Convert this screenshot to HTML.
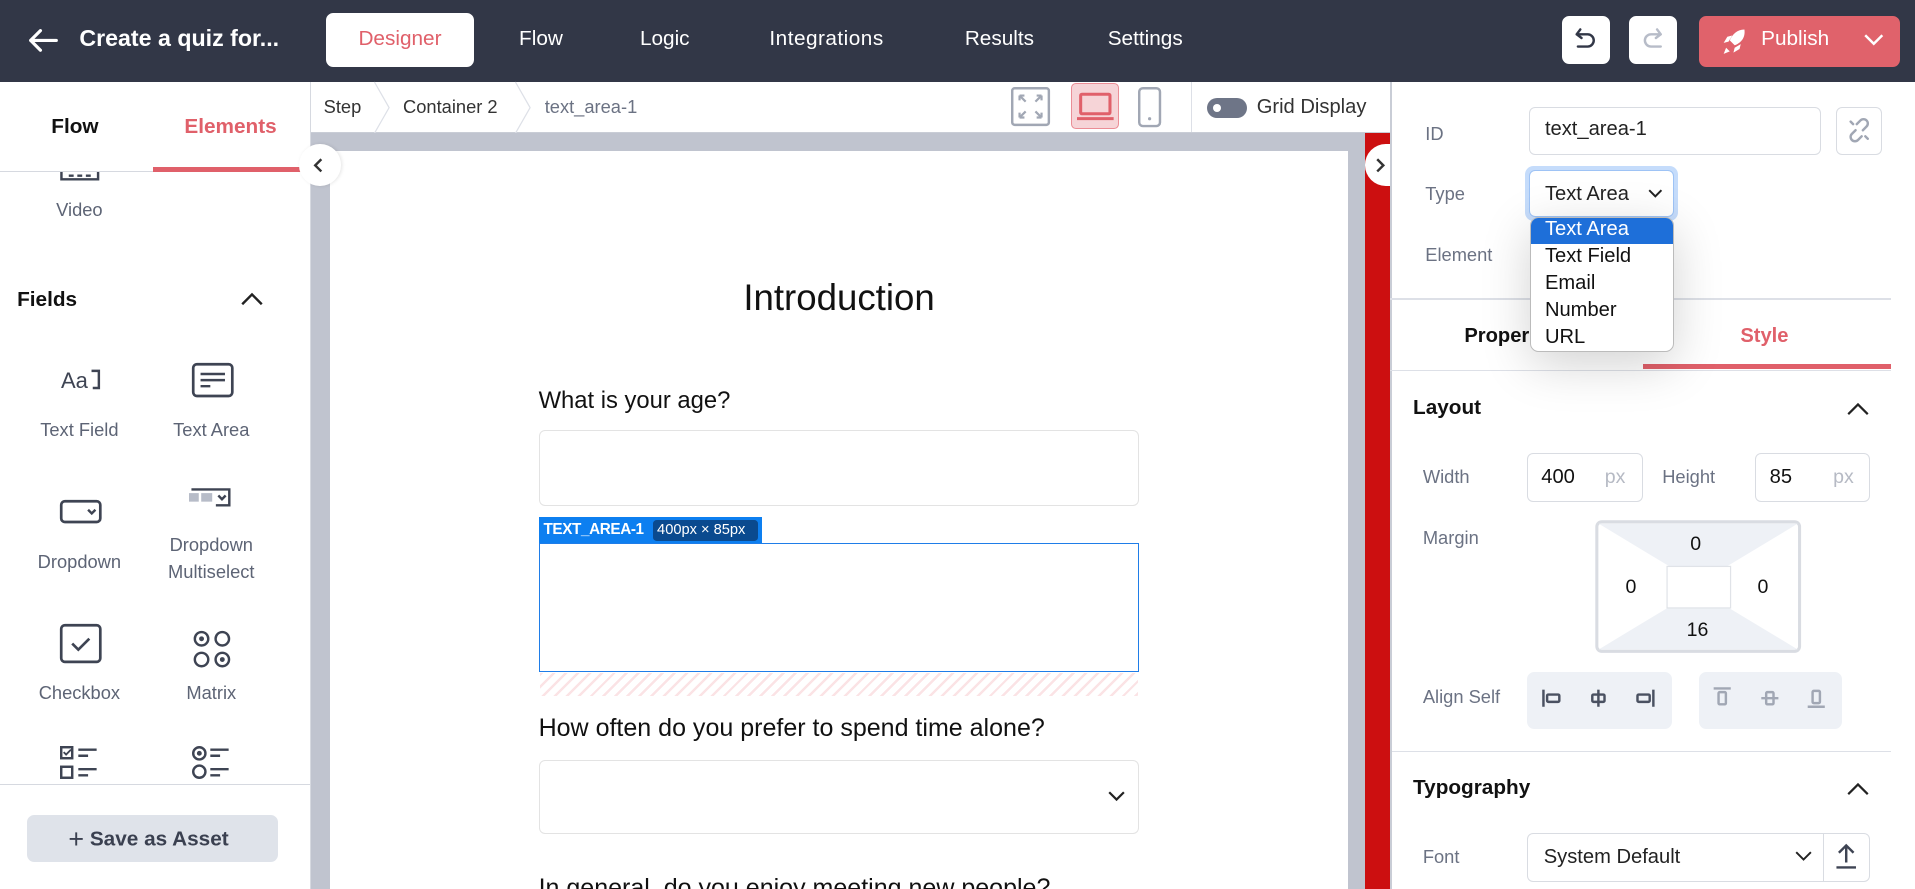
<!DOCTYPE html>
<html><head><meta charset="utf-8"><style>
html,body{margin:0;padding:0;overflow:hidden;background:#fff}
body{zoom:1.2213;width:1568px;height:728px;position:relative;font-family:"Liberation Sans",sans-serif;color:#111}
.a{position:absolute}
.t{position:absolute;white-space:nowrap;line-height:20px}
.nav{color:#fff;font-size:17px;top:22px}
.lbl{color:#5d6475;font-size:15px;text-align:center;width:116px}
.rl{color:#6b7283;font-size:15px}
.box{position:absolute;border:1px solid #d9dce2;border-radius:5px;background:#fff;box-sizing:border-box}
svg{position:absolute;overflow:visible}
</style></head><body>
<!-- top bar -->
<div class="a" style="left:0;top:0;width:1568px;height:67px;background:#323747"></div>
<svg style="left:22px;top:22px" width="26" height="22" viewBox="0 0 26 22"><path d="M24 11H3M11 3L3 11l8 8" stroke="#fff" stroke-width="2.6" fill="none" stroke-linecap="round" stroke-linejoin="round"/></svg>
<div class="t" style="left:65px;top:21px;color:#fff;font-size:19px;font-weight:bold">Create a quiz for...</div>
<div class="a" style="left:267px;top:11px;width:121px;height:44px;background:#fff;border-radius:6px"></div>
<div class="t nav" style="left:267px;width:121px;text-align:center;color:#e0606a">Designer</div>
<div class="t nav" style="left:425px">Flow</div>
<div class="t nav" style="left:524px">Logic</div>
<div class="t nav" style="left:630px;letter-spacing:0.4px">Integrations</div>
<div class="t nav" style="left:790px">Results</div>
<div class="t nav" style="left:907px">Settings</div>
<div class="a" style="left:1279px;top:13px;width:39px;height:39px;background:#fff;border-radius:6px"></div>
<svg style="left:1288px;top:22px" width="22" height="22" viewBox="0 0 22 22"><path d="M6 2L3 6l4 3M3 6h9a5 5 0 010 10H4" stroke="#323747" stroke-width="2" fill="none" stroke-linecap="round" stroke-linejoin="round"/></svg>
<div class="a" style="left:1334px;top:13px;width:39px;height:39px;background:#fff;border-radius:6px"></div>
<svg style="left:1343px;top:22px" width="22" height="22" viewBox="0 0 22 22"><path d="M14 2l3 4-4 3M17 6H9a5 5 0 000 10h8" stroke="#b7bcc8" stroke-width="2" fill="none" stroke-linecap="round" stroke-linejoin="round"/></svg>
<div class="a" style="left:1391px;top:13px;width:165px;height:42px;background:#e0626b;border-radius:6px"></div>
<svg style="left:1408px;top:22px" width="24" height="24" viewBox="0 0 24 24"><path d="M20 2c-6 0-10 4-12 9l4 4c5-2 9-6 8-13zM7 12l-4 1 3-5 4-1M12 17l-1 4 5-3 1-4M5 17l-2 5 5-2" fill="#fff"/></svg>
<div class="t nav" style="left:1442px;font-weight:normal">Publish</div>
<svg style="left:1526px;top:28px" width="16" height="10"><path d="M1 1l7 7 7-7" stroke="#fff" stroke-width="2" fill="none"/></svg>

<!-- left panel -->
<div class="a" style="left:0;top:67px;width:254px;height:661px;background:#fff;border-right:1px solid #d6d9e0"></div>
<div class="t" style="left:42px;top:94px;font-size:17px;font-weight:bold;color:#111">Flow</div>
<div class="t" style="left:151px;top:94px;font-size:17px;font-weight:bold;color:#e0606a">Elements</div>
<div class="a" style="left:0;top:140px;width:254px;height:1px;background:#d6d9e0"></div>
<div class="a" style="left:125px;top:137px;width:130px;height:4px;background:#e0606a"></div>
<svg style="left:48px;top:141px" width="36" height="10"><path d="M2 0v6h30V0M8 3h4M15 3h4M22 3h4" stroke="#3e4453" stroke-width="2" fill="none"/></svg>
<div class="t lbl" style="left:7px;top:162px">Video</div>
<div class="t" style="left:14px;top:236px;font-size:17px;font-weight:bold">Fields</div>
<svg style="left:197px;top:239px" width="18" height="12"><path d="M1 10l8-8 8 8" stroke="#222" stroke-width="2" fill="none"/></svg>
<svg style="left:50px;top:300px" width="34" height="22"><text x="0" y="18" font-family="Liberation Sans" font-size="18" fill="#3e4453">Aa</text><path d="M25 4h6v14h-5" stroke="#3e4453" stroke-width="2" fill="none"/></svg>
<div class="t lbl" style="left:7px;top:342px">Text Field</div>
<svg style="left:157px;top:297px" width="34" height="28"><rect x="1" y="1" width="32" height="26" rx="3" stroke="#3e4453" stroke-width="2.2" fill="none"/><path d="M7 9h20M7 14h20M7 19h8" stroke="#3e4453" stroke-width="2"/></svg>
<div class="t lbl" style="left:115px;top:342px">Text Area</div>
<svg style="left:49px;top:409px" width="34" height="20"><rect x="1" y="1" width="32" height="17" rx="3" stroke="#3e4453" stroke-width="2.2" fill="none"/><path d="M23 8l3 3 3-3" stroke="#3e4453" stroke-width="2" fill="none"/></svg>
<div class="t lbl" style="left:7px;top:450px">Dropdown</div>
<svg style="left:155px;top:399px" width="36" height="18"><rect x="0" y="5" width="8" height="7" fill="#b7bcc8"/><rect x="10" y="5" width="9" height="7" fill="#b7bcc8"/><path d="M2 2h31v13H22" stroke="#3e4453" stroke-width="2" fill="none"/><path d="M24 7l3 3 3-3" stroke="#3e4453" stroke-width="2" fill="none"/></svg>
<div class="t lbl" style="left:115px;top:436px;line-height:22px">Dropdown<br>Multiselect</div>
<svg style="left:49px;top:511px" width="34" height="32"><rect x="1" y="1" width="32" height="30" rx="3" stroke="#3e4453" stroke-width="2.2" fill="none"/><path d="M10 16l5 5 9-9" stroke="#3e4453" stroke-width="2.2" fill="none"/></svg>
<div class="t lbl" style="left:7px;top:558px">Checkbox</div>
<svg style="left:158px;top:515px" width="32" height="32"><circle cx="7" cy="8" r="5.5" stroke="#3e4453" stroke-width="2" fill="none"/><circle cx="7" cy="8" r="2" fill="#3e4453"/><circle cx="24" cy="8" r="5.5" stroke="#3e4453" stroke-width="2" fill="none"/><circle cx="7" cy="25" r="5.5" stroke="#3e4453" stroke-width="2" fill="none"/><circle cx="24" cy="25" r="5.5" stroke="#3e4453" stroke-width="2" fill="none"/><circle cx="24" cy="25" r="2" fill="#3e4453"/></svg>
<div class="t lbl" style="left:115px;top:558px">Matrix</div>
<svg style="left:49px;top:611px" width="36" height="28"><rect x="1" y="1" width="9" height="9" stroke="#3e4453" stroke-width="2" fill="none"/><path d="M3 5l2 2 4-4" stroke="#3e4453" stroke-width="1.5" fill="none"/><rect x="1" y="17" width="9" height="9" stroke="#3e4453" stroke-width="2" fill="none"/><path d="M15 3h15M15 8h8M15 19h15M15 24h8" stroke="#3e4453" stroke-width="2"/></svg>
<svg style="left:157px;top:611px" width="36" height="28"><circle cx="6" cy="6" r="5" stroke="#3e4453" stroke-width="2" fill="none"/><circle cx="6" cy="6" r="2" fill="#3e4453"/><circle cx="6" cy="21" r="5" stroke="#3e4453" stroke-width="2" fill="none"/><path d="M15 3h15M15 8h8M15 19h15M15 24h8" stroke="#3e4453" stroke-width="2"/></svg>
<div class="a" style="left:0;top:642px;width:254px;height:86px;background:#fff;border-top:1px solid #d6d9e0"></div>
<div class="a" style="left:22px;top:667px;width:206px;height:39px;background:#dfe3ea;border-radius:6px"></div>
<div class="t" style="left:56px;top:677px;font-size:17px;font-weight:bold;color:#3a4050"><span style="font-weight:normal;font-size:22px;vertical-align:-2px">+</span> Save as Asset</div>

<!-- canvas -->
<div class="a" style="left:255px;top:67px;width:883px;height:41px;background:#fff;border-bottom:1px solid #c9cdd6"></div>
<div class="t" style="left:265px;top:78px;font-size:15px;color:#333">Step</div>
<svg style="left:305px;top:67px" width="16" height="42"><path d="M2 0l12 21-12 21" stroke="#dde0e7" stroke-width="1" fill="none"/></svg>
<div class="t" style="left:330px;top:78px;font-size:15px;color:#333">Container 2</div>
<svg style="left:420px;top:67px" width="16" height="42"><path d="M2 0l12 21-12 21" stroke="#dde0e7" stroke-width="1" fill="none"/></svg>
<div class="t" style="left:446px;top:78px;font-size:15px;color:#6b7283">text_area-1</div>
<svg style="left:828px;top:71px" width="32" height="32"><rect x="1" y="1" width="30" height="30" rx="2" stroke="#a1a7b4" stroke-width="2" fill="none"/><path d="M7 7l5 5M7 7h4M7 7v4M25 7l-5 5M25 7h-4M25 7v4M7 25l5-5M7 25h4M7 25v-4M25 25l-5-5M25 25h-4M25 25v-4" stroke="#a1a7b4" stroke-width="1.8"/></svg>
<div class="a" style="left:877px;top:68px;width:39px;height:38px;background:#f6d4d7;border:1px solid #eb8e96;border-radius:4px;box-sizing:border-box"></div>
<svg style="left:882px;top:76px" width="30" height="24"><rect x="3" y="1" width="24" height="16" rx="1" stroke="#e0606a" stroke-width="2.5" fill="none"/><path d="M0 21h30" stroke="#e0606a" stroke-width="2.5"/></svg>
<svg style="left:932px;top:71px" width="20" height="34"><rect x="1" y="1" width="17" height="31" rx="3" stroke="#a1a7b4" stroke-width="2" fill="none"/><circle cx="9.5" cy="26" r="1.3" fill="#a1a7b4"/></svg>
<div class="a" style="left:975px;top:67px;width:1px;height:41px;background:#dde0e7"></div>
<div class="a" style="left:988px;top:80px;width:33px;height:17px;background:#6e7587;border-radius:9px"></div>
<div class="a" style="left:993px;top:85px;width:7px;height:7px;background:#fff;border-radius:50%"></div>
<div class="t" style="left:1029px;top:78px;font-size:16.5px;color:#333">Grid Display</div>

<div class="a" style="left:255px;top:109px;width:883px;height:619px;background:#c0c4cf"></div>
<div class="a" style="left:1118px;top:109px;width:20px;height:619px;background:#cc0f10"></div>
<div class="a" style="left:270px;top:124px;width:834px;height:604px;background:#fff"></div>
<div class="a" style="left:245px;top:118px;width:34px;height:34px;background:#fff;border-radius:50%;box-shadow:1px 0 3px rgba(0,0,0,.1)"></div>
<svg style="left:257px;top:129px" width="8" height="12"><path d="M6 1L1 6l5 5" stroke="#333" stroke-width="2" fill="none"/></svg>
<div class="a" style="left:1118px;top:118px;width:22px;height:34px;background:#fff;border-radius:17px 0 0 17px"></div>
<svg style="left:1127px;top:129px" width="8" height="12"><path d="M1 1l5 5-5 5" stroke="#333" stroke-width="2" fill="none"/></svg>
<div class="t" style="left:270px;width:834px;text-align:center;top:227px;font-size:30px;line-height:34px;color:#111">Introduction</div>
<div class="t" style="left:441px;top:316px;font-size:19.5px;line-height:24px">What is your age?</div>
<div class="box" style="left:441px;top:352px;width:492px;height:62px;border-color:#e3e3e3"></div>
<div class="a" style="left:441px;top:423px;width:183px;height:22px;background:#0d7ff0"></div>
<div class="t" style="left:445px;top:424px;font-size:12.5px;color:#fff;font-weight:bold;letter-spacing:-0.3px">TEXT_AREA-1</div>
<div class="a" style="left:535px;top:426px;width:86px;height:17px;background:#0a4a8f;border-radius:3px"></div>
<div class="t" style="left:538px;top:424px;font-size:12px;color:#fff">400px × 85px</div>
<div class="a" style="left:441px;top:445px;width:492px;height:105px;border:1px solid #1f7de8;box-sizing:border-box"></div>
<div class="a" style="left:442px;top:551px;width:490px;height:19px;background:repeating-linear-gradient(135deg,#fbe3e5 0 2px,#fff 2px 7px)"></div>
<div class="t" style="left:441px;top:585px;font-size:20.5px;line-height:24px">How often do you prefer to spend time alone?</div>
<div class="box" style="left:441px;top:622px;width:492px;height:61px;border-color:#e3e3e3"></div>
<svg style="left:907px;top:648px" width="14" height="9"><path d="M1 1l6 6 6-6" stroke="#222" stroke-width="1.8" fill="none"/></svg>
<div class="t" style="left:441px;top:716px;font-size:20.5px;line-height:24px">In general, do you enjoy meeting new people?</div>

<!-- right panel -->
<div class="a" style="left:1138px;top:67px;width:430px;height:661px;background:#fff;border-left:2px solid #c9cdd6;box-sizing:border-box"></div>
<div class="t rl" style="left:1167px;top:100px">ID</div>
<div class="box" style="left:1252px;top:88px;width:239px;height:39px"></div>
<div class="t" style="left:1265px;top:96px;font-size:16.5px;color:#222">text_area-1</div>
<div class="box" style="left:1503px;top:88px;width:38px;height:39px"></div>
<svg style="left:1512px;top:97px" width="20" height="20"><path d="M8 5l3-3a3.5 3.5 0 015 5l-3 3M12 15l-3 3a3.5 3.5 0 01-5-5l3-3M5 5L3 3M15 15l2 2" stroke="#a1a7b4" stroke-width="2" fill="none" stroke-linecap="round"/></svg>
<div class="t rl" style="left:1167px;top:149px">Type</div>
<div class="a" style="left:1249px;top:136px;width:125px;height:45px;border-radius:7px;background:#c5dcfb"></div>
<div class="box" style="left:1252px;top:139px;width:119px;height:39px;border-color:#9ec3f5"></div>
<div class="t" style="left:1265px;top:149px;font-size:16.5px;color:#222">Text Area</div>
<svg style="left:1349px;top:155px" width="12" height="8"><path d="M1 1l5 5 5-5" stroke="#222" stroke-width="1.6" fill="none"/></svg>
<div class="t rl" style="left:1167px;top:199px">Element</div>
<div class="a" style="left:1138px;top:244px;width:410px;height:2px;background:#dde0e7"></div>
<div class="t" style="left:1199px;top:265px;font-size:16.5px;font-weight:bold">Proper</div>
<div class="t" style="left:1425px;top:265px;font-size:16.5px;font-weight:bold;color:#e0606a">Style</div>
<div class="a" style="left:1345px;top:298px;width:203px;height:4px;background:#e0606a"></div>
<div class="a" style="left:1138px;top:303px;width:410px;height:1px;background:#dde0e7"></div>
<div class="a" style="left:1253px;top:178px;width:118px;height:110px;background:#fff;border:1px solid #bbb;border-radius:7px;box-shadow:0 10px 40px rgba(0,0,0,.18);overflow:hidden;box-sizing:border-box">
<div style="height:21px;background:#1e6fd9"></div></div>
<div class="t" style="left:1265px;top:178px;font-size:16.5px;color:#fff;line-height:21px">Text Area</div>
<div class="t" style="left:1265px;top:200px;font-size:16.5px;line-height:21px;color:#111">Text Field</div>
<div class="t" style="left:1265px;top:222px;font-size:16.5px;line-height:21px;color:#111">Email</div>
<div class="t" style="left:1265px;top:244px;font-size:16.5px;line-height:21px;color:#111">Number</div>
<div class="t" style="left:1265px;top:266px;font-size:16.5px;line-height:21px;color:#111">URL</div>

<div class="t" style="left:1157px;top:324px;font-size:17px;font-weight:bold">Layout</div>
<svg style="left:1512px;top:329px" width="18" height="11"><path d="M1 10l8-8 8 8" stroke="#222" stroke-width="1.8" fill="none"/></svg>
<div class="t rl" style="left:1165px;top:381px">Width</div>
<div class="box" style="left:1250px;top:371px;width:95px;height:40px"></div>
<div class="t" style="left:1262px;top:381px;font-size:16.5px;color:#111">400</div>
<div class="t" style="left:1314px;top:381px;font-size:16px;color:#b6bac4">px</div>
<div class="t rl" style="left:1361px;top:381px">Height</div>
<div class="box" style="left:1437px;top:371px;width:94px;height:40px"></div>
<div class="t" style="left:1449px;top:381px;font-size:16.5px;color:#111">85</div>
<div class="t" style="left:1501px;top:381px;font-size:16px;color:#b6bac4">px</div>
<div class="t rl" style="left:1165px;top:431px">Margin</div>
<svg style="left:1306px;top:426px" width="169" height="109"><rect x="1.5" y="1.5" width="166" height="106" rx="4" fill="#fff" stroke="#d9dce2" stroke-width="2.5"/><path d="M3 3h163l-58 35H61zM3 106h163l-58-35H61z" fill="#eef1f6"/><rect x="59" y="38" width="52" height="34" fill="#fff" stroke="#e0e3e8"/></svg>
<div class="t" style="left:1384px;top:436px;font-size:16px">0</div>
<div class="t" style="left:1331px;top:471px;font-size:16px">0</div>
<div class="t" style="left:1439px;top:471px;font-size:16px">0</div>
<div class="t" style="left:1381px;top:506px;font-size:16px">16</div>
<div class="t rl" style="left:1165px;top:561px">Align Self</div>
<div class="a" style="left:1250px;top:550px;width:119px;height:47px;background:#eef1f6;border-radius:6px"></div>
<div class="a" style="left:1391px;top:550px;width:117px;height:47px;background:#eef1f6;border-radius:6px"></div>
<svg style="left:1262px;top:562px" width="100" height="24"><path d="M2 3v14" stroke="#4a5161" stroke-width="2"/><rect x="5" y="7" width="10" height="6" rx="1" stroke="#4a5161" stroke-width="2" fill="none"/><path d="M47 3v14" stroke="#4a5161" stroke-width="2"/><rect x="42" y="7" width="10" height="6" rx="1" stroke="#4a5161" stroke-width="2" fill="none"/><path d="M92 3v14" stroke="#4a5161" stroke-width="2"/><rect x="79" y="7" width="10" height="6" rx="1" stroke="#4a5161" stroke-width="2" fill="none"/></svg>
<svg style="left:1400px;top:562px" width="110" height="24"><path d="M3 2h14" stroke="#a1a7b4" stroke-width="2"/><rect x="7" y="5" width="6" height="10" rx="1" stroke="#a1a7b4" stroke-width="2" fill="none"/><path d="M42 10h14" stroke="#a1a7b4" stroke-width="2"/><rect x="46" y="5" width="6" height="10" rx="1" stroke="#a1a7b4" stroke-width="2" fill="none"/><path d="M80 17h14" stroke="#a1a7b4" stroke-width="2"/><rect x="84" y="4" width="6" height="10" rx="1" stroke="#a1a7b4" stroke-width="2" fill="none"/></svg>
<div class="a" style="left:1140px;top:615px;width:408px;height:1px;background:#dde0e7"></div>
<div class="t" style="left:1157px;top:635px;font-size:17px;font-weight:bold">Typography</div>
<svg style="left:1512px;top:640px" width="18" height="11"><path d="M1 10l8-8 8 8" stroke="#222" stroke-width="1.8" fill="none"/></svg>
<div class="t rl" style="left:1165px;top:692px">Font</div>
<div class="box" style="left:1250px;top:682px;width:244px;height:40px;border-radius:5px 0 0 5px"></div>
<div class="t" style="left:1264px;top:692px;font-size:16.5px;color:#222">System Default</div>
<svg style="left:1470px;top:697px" width="14" height="9"><path d="M1 1l6 6 6-6" stroke="#222" stroke-width="1.6" fill="none"/></svg>
<div class="box" style="left:1493px;top:682px;width:38px;height:40px;border-radius:0 5px 5px 0"></div>
<svg style="left:1502px;top:690px" width="20" height="22"><path d="M10 16V2M4 8l6-6 6 6M2 20h16" stroke="#3e4453" stroke-width="2" fill="none"/></svg>
</body></html>
